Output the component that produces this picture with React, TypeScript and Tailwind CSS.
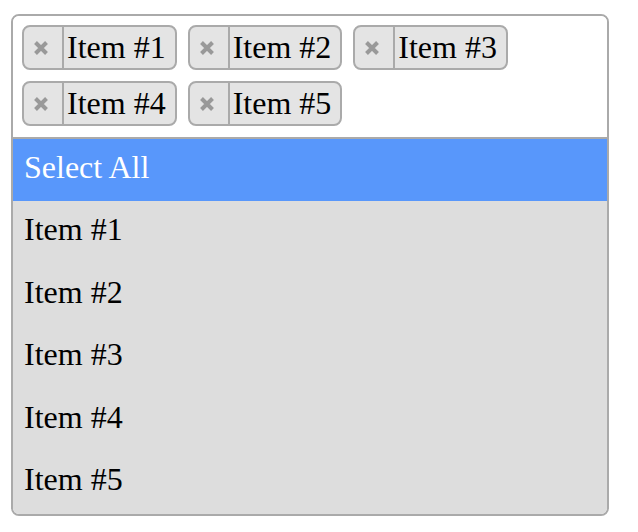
const chips = ["Item #1", "Item #2", "Item #3", "Item #4", "Item #5"];
const options = ["Item #1", "Item #2", "Item #3", "Item #4", "Item #5"];

function Chip({ label }: { label: string }) {
  return (
    <div className="flex h-[45px] items-stretch rounded-[8px] border-2 border-[#aaa] bg-[#e4e4e4]">
      <span className="flex items-center border-r-2 border-[#aaa] pl-[9px] pr-[13px]">
        <svg width="16" height="16" viewBox="0 0 16 16" className="text-[#999]">
          <path d="M2.5 2.5L13.5 13.5M13.5 2.5L2.5 13.5" stroke="currentColor" strokeWidth={4} />
        </svg>
      </span>
      <span className="pl-[3px] pr-[9px] leading-[41px] text-black">{label}</span>
    </div>
  );
}

export default function App() {
  return (
    <div
      className="min-h-screen bg-white pl-[11px] pt-[14px] text-[32px]"
      style={{ fontFamily: '"Liberation Serif", "Times New Roman", serif' }}
    >
      <div className="w-[598px] overflow-hidden rounded-[8px] border-2 border-[#aaa]">
        <div className="flex flex-wrap gap-[11px] border-b-2 border-[#aaa] bg-white px-[9px] pb-[11px] pt-[9px]">
          {chips.map((c) => (
            <Chip key={c} label={c} />
          ))}
        </div>
        <ul className="bg-[#ddd]">
          <li className="h-[62px] bg-[#5897fb] px-[11px] pt-[10px] leading-[37px] text-white">
            Select All
          </li>
          {options.map((o) => (
            <li key={o} className="h-[62.5px] px-[11px] pt-[10px] leading-[37px] text-black">
              {o}
            </li>
          ))}
        </ul>
      </div>
    </div>
  );
}
